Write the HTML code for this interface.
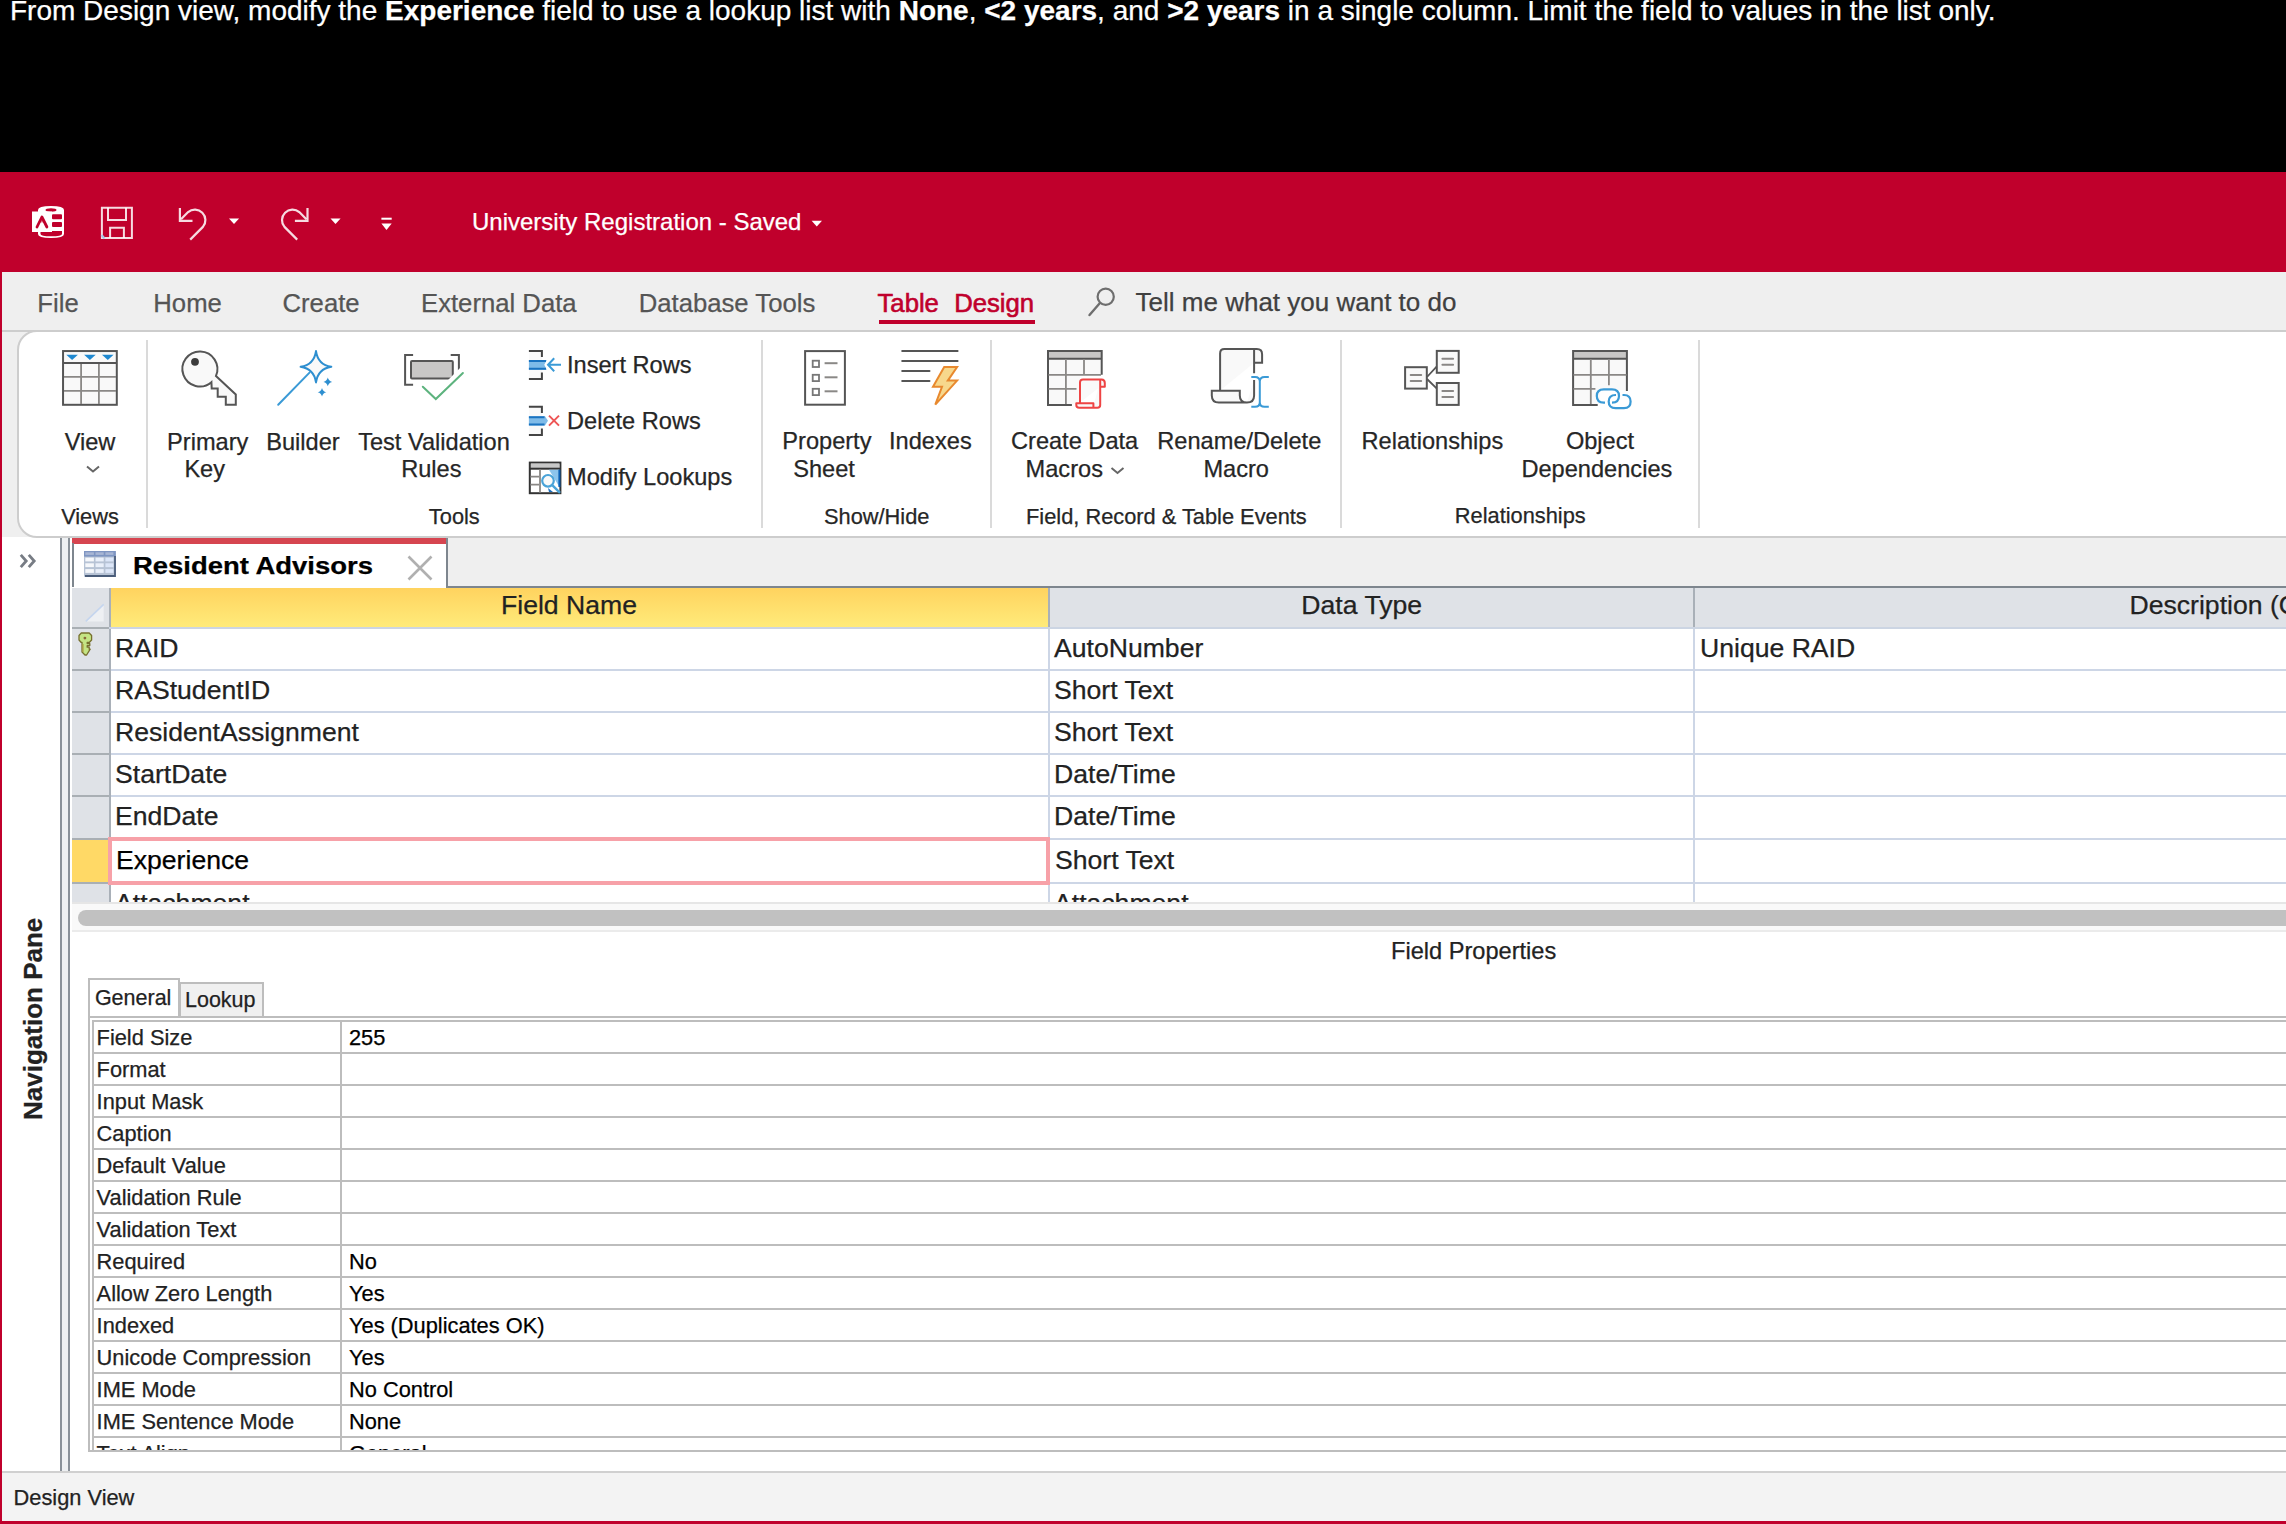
<!DOCTYPE html>
<html><head><meta charset="utf-8"><style>
html,body{margin:0;padding:0;width:2286px;height:1524px;overflow:hidden;background:#fff;font-family:"Liberation Sans", sans-serif;}
div{-webkit-text-stroke:0.25px currentColor;}
</style></head><body>
<div style="position:absolute;left:0px;top:0px;width:2286px;height:172px;background:#000"></div>
<div style="position:absolute;left:10.00px;top:-2.70px;font-size:28px;line-height:28px;color:#fff;font-weight:normal;white-space:nowrap;">From Design view, modify the <b>Experience</b> field to use a lookup list with <b>None</b>, <b>&lt;2 years</b>, and <b>&gt;2 years</b> in a single column. Limit the field to values in the list only.</div>
<div style="position:absolute;left:0px;top:172px;width:2286px;height:100px;background:#C0002C"></div>
<div style="position:absolute;left:472.00px;top:210.38px;font-size:24px;line-height:24px;color:#fff;font-weight:normal;white-space:nowrap;">University Registration - Saved</div>
<div style="position:absolute;left:0px;top:272px;width:2286px;height:265px;background:#EFEFEF"></div>
<div style="position:absolute;left:37.30px;top:290.54px;font-size:25.7px;line-height:25.7px;color:#555555;font-weight:normal;white-space:nowrap;">File</div>
<div style="position:absolute;left:153.30px;top:290.54px;font-size:25.7px;line-height:25.7px;color:#555555;font-weight:normal;white-space:nowrap;">Home</div>
<div style="position:absolute;left:282.50px;top:290.54px;font-size:25.7px;line-height:25.7px;color:#555555;font-weight:normal;white-space:nowrap;">Create</div>
<div style="position:absolute;left:421.00px;top:290.54px;font-size:25.7px;line-height:25.7px;color:#555555;font-weight:normal;white-space:nowrap;">External Data</div>
<div style="position:absolute;left:638.70px;top:290.54px;font-size:25.7px;line-height:25.7px;color:#555555;font-weight:normal;white-space:nowrap;">Database Tools</div>
<div style="position:absolute;left:877.50px;top:290.54px;font-size:25.7px;line-height:25.7px;color:#C0002C;font-weight:normal;white-space:nowrap;-webkit-text-stroke:0.6px currentColor">Table</div>
<div style="position:absolute;left:954.20px;top:290.54px;font-size:25.7px;line-height:25.7px;color:#C0002C;font-weight:normal;white-space:nowrap;-webkit-text-stroke:0.6px currentColor">Design</div>
<div style="position:absolute;left:878.5px;top:320px;width:156px;height:4px;background:#C0002C"></div>
<div style="position:absolute;left:1135.60px;top:289.19px;font-size:26px;line-height:26px;color:#404040;font-weight:normal;white-space:nowrap;">Tell me what you want to do</div>
<div style="position:absolute;left:0px;top:330px;width:2286px;height:2px;background:#CDCDCD"></div>
<div style="position:absolute;left:17px;top:330px;width:2400px;height:208px;box-sizing:border-box;border:2px solid #CDCDCD;border-radius:20px;background:#fff"></div>
<div style="position:absolute;left:-410.00px;width:1000px;text-align:center;top:430.52px;font-size:23.6px;line-height:23.6px;color:#262626;font-weight:normal;white-space:nowrap;">View</div>
<div style="position:absolute;left:-410.00px;width:1000px;text-align:center;top:506.05px;font-size:21.8px;line-height:21.8px;color:#262626;font-weight:normal;white-space:nowrap;">Views</div>
<div style="position:absolute;left:-292.30px;width:1000px;text-align:center;top:430.72px;font-size:23.6px;line-height:23.6px;color:#262626;font-weight:normal;white-space:nowrap;">Primary</div>
<div style="position:absolute;left:-295.30px;width:1000px;text-align:center;top:458.32px;font-size:23.6px;line-height:23.6px;color:#262626;font-weight:normal;white-space:nowrap;">Key</div>
<div style="position:absolute;left:-197.00px;width:1000px;text-align:center;top:430.72px;font-size:23.6px;line-height:23.6px;color:#262626;font-weight:normal;white-space:nowrap;">Builder</div>
<div style="position:absolute;left:-66.00px;width:1000px;text-align:center;top:430.72px;font-size:23.6px;line-height:23.6px;color:#262626;font-weight:normal;white-space:nowrap;">Test Validation</div>
<div style="position:absolute;left:-68.70px;width:1000px;text-align:center;top:458.32px;font-size:23.6px;line-height:23.6px;color:#262626;font-weight:normal;white-space:nowrap;">Rules</div>
<div style="position:absolute;left:567.00px;top:354.22px;font-size:23.6px;line-height:23.6px;color:#262626;font-weight:normal;white-space:nowrap;">Insert Rows</div>
<div style="position:absolute;left:567.00px;top:410.32px;font-size:23.6px;line-height:23.6px;color:#262626;font-weight:normal;white-space:nowrap;">Delete Rows</div>
<div style="position:absolute;left:567.00px;top:466.12px;font-size:23.6px;line-height:23.6px;color:#262626;font-weight:normal;white-space:nowrap;">Modify Lookups</div>
<div style="position:absolute;left:-45.70px;width:1000px;text-align:center;top:505.55px;font-size:21.8px;line-height:21.8px;color:#262626;font-weight:normal;white-space:nowrap;">Tools</div>
<div style="position:absolute;left:326.90px;width:1000px;text-align:center;top:430.32px;font-size:23.6px;line-height:23.6px;color:#262626;font-weight:normal;white-space:nowrap;">Property</div>
<div style="position:absolute;left:324.00px;width:1000px;text-align:center;top:457.92px;font-size:23.6px;line-height:23.6px;color:#262626;font-weight:normal;white-space:nowrap;">Sheet</div>
<div style="position:absolute;left:430.40px;width:1000px;text-align:center;top:430.32px;font-size:23.6px;line-height:23.6px;color:#262626;font-weight:normal;white-space:nowrap;">Indexes</div>
<div style="position:absolute;left:376.70px;width:1000px;text-align:center;top:505.55px;font-size:21.8px;line-height:21.8px;color:#262626;font-weight:normal;white-space:nowrap;">Show/Hide</div>
<div style="position:absolute;left:574.60px;width:1000px;text-align:center;top:430.22px;font-size:23.6px;line-height:23.6px;color:#262626;font-weight:normal;white-space:nowrap;">Create Data</div>
<div style="position:absolute;left:1025.60px;top:458.42px;font-size:23.6px;line-height:23.6px;color:#262626;font-weight:normal;white-space:nowrap;">Macros</div>
<div style="position:absolute;left:739.30px;width:1000px;text-align:center;top:430.22px;font-size:23.6px;line-height:23.6px;color:#262626;font-weight:normal;white-space:nowrap;">Rename/Delete</div>
<div style="position:absolute;left:736.20px;width:1000px;text-align:center;top:457.92px;font-size:23.6px;line-height:23.6px;color:#262626;font-weight:normal;white-space:nowrap;">Macro</div>
<div style="position:absolute;left:666.40px;width:1000px;text-align:center;top:505.65px;font-size:21.8px;line-height:21.8px;color:#262626;font-weight:normal;white-space:nowrap;">Field, Record &amp; Table Events</div>
<div style="position:absolute;left:932.40px;width:1000px;text-align:center;top:430.12px;font-size:23.6px;line-height:23.6px;color:#262626;font-weight:normal;white-space:nowrap;">Relationships</div>
<div style="position:absolute;left:1100.00px;width:1000px;text-align:center;top:430.12px;font-size:23.6px;line-height:23.6px;color:#262626;font-weight:normal;white-space:nowrap;">Object</div>
<div style="position:absolute;left:1096.90px;width:1000px;text-align:center;top:457.62px;font-size:23.6px;line-height:23.6px;color:#262626;font-weight:normal;white-space:nowrap;">Dependencies</div>
<div style="position:absolute;left:1020.30px;width:1000px;text-align:center;top:505.45px;font-size:21.8px;line-height:21.8px;color:#262626;font-weight:normal;white-space:nowrap;">Relationships</div>
<div style="position:absolute;left:146px;top:340px;width:2px;height:188px;background:#DADADA"></div>
<div style="position:absolute;left:761px;top:340px;width:2px;height:188px;background:#DADADA"></div>
<div style="position:absolute;left:990px;top:340px;width:2px;height:188px;background:#DADADA"></div>
<div style="position:absolute;left:1340px;top:340px;width:2px;height:188px;background:#DADADA"></div>
<div style="position:absolute;left:1698px;top:340px;width:2px;height:188px;background:#DADADA"></div>
<div style="position:absolute;left:0px;top:538px;width:2286px;height:934px;background:#fff"></div>
<div style="position:absolute;left:72px;top:538px;width:2214px;height:49px;background:#EFEFEF"></div>
<div style="position:absolute;left:60px;top:538px;width:2px;height:934px;background:#8A9199"></div>
<div style="position:absolute;left:62px;top:538px;width:6px;height:934px;background:#EEF0F2"></div>
<div style="position:absolute;left:68px;top:538px;width:2px;height:934px;background:#8A9199"></div>
<div style="position:absolute;left:41.7px;top:1119.7px;transform-origin:0 0;transform:rotate(-90deg);"><div style="position:absolute;left:0;top:-22.01px;font-size:26px;line-height:26px;font-weight:bold;color:#222;white-space:nowrap">Navigation Pane</div></div>
<div style="position:absolute;left:72px;top:538px;width:376px;height:49px;background:#fff"></div>
<div style="position:absolute;left:72px;top:538px;width:376px;height:6px;background:#D64550"></div>
<div style="position:absolute;left:72px;top:543px;width:2px;height:44px;background:#7E868E"></div>
<div style="position:absolute;left:446px;top:538px;width:2px;height:49px;background:#7E868E"></div>
<div style="position:absolute;left:132.50px;top:554.16px;font-size:24.5px;line-height:24.5px;color:#000;font-weight:bold;white-space:nowrap;transform:scaleX(1.12);transform-origin:0 0">Resident Advisors</div>
<div style="position:absolute;left:446px;top:586px;width:1840px;height:2px;background:#7E868E"></div>
<div style="position:absolute;left:72px;top:588px;width:37px;height:39px;background:#DFE2E7"></div>
<div style="position:absolute;left:109px;top:588px;width:2px;height:39px;background:#A9B0B8"></div>
<div style="position:absolute;left:111px;top:588px;width:937px;height:39px;background:linear-gradient(#FFD35F,#FFEB7A)"></div>
<div style="position:absolute;left:1048px;top:588px;width:2px;height:39px;background:#A9B0B8"></div>
<div style="position:absolute;left:1050px;top:588px;width:643px;height:39px;background:#DFE2E7"></div>
<div style="position:absolute;left:1693px;top:588px;width:2px;height:39px;background:#A9B0B8"></div>
<div style="position:absolute;left:1695px;top:588px;width:600px;height:39px;background:#DFE2E7"></div>
<div style="position:absolute;left:72px;top:627px;width:2214px;height:2px;background:#CCD5E3"></div>
<div style="position:absolute;left:72px;top:627px;width:37px;height:2px;background:#A9AFB4"></div>
<div style="position:absolute;left:501.00px;top:592.38px;font-size:26.6px;line-height:26.6px;color:#222;font-weight:normal;white-space:nowrap;">Field Name</div>
<div style="position:absolute;left:1301.30px;top:592.38px;font-size:26.6px;line-height:26.6px;color:#222;font-weight:normal;white-space:nowrap;">Data Type</div>
<div style="position:absolute;left:2129.50px;top:592.38px;font-size:26.6px;line-height:26.6px;color:#222;font-weight:normal;white-space:nowrap;">Description (Optional)</div>
<div style="position:absolute;left:72px;top:629px;width:2214px;height:273px;background:#fff"></div>
<div style="position:absolute;left:72px;top:629px;width:37px;height:273px;background:#DFE2E7"></div>
<div style="position:absolute;left:109px;top:629px;width:2px;height:273px;background:#A9B0B8"></div>
<div style="position:absolute;left:1048px;top:629px;width:2px;height:273px;background:#CDD6E6"></div>
<div style="position:absolute;left:1693px;top:629px;width:2px;height:273px;background:#CDD6E6"></div>
<div style="position:absolute;left:72px;top:669px;width:37px;height:2px;background:#A9AFB4"></div>
<div style="position:absolute;left:111px;top:669px;width:2175px;height:2px;background:#CDD6E6"></div>
<div style="position:absolute;left:115.00px;top:635.48px;font-size:26.6px;line-height:26.6px;color:#222;font-weight:normal;white-space:nowrap;">RAID</div>
<div style="position:absolute;left:1054.00px;top:635.48px;font-size:26.6px;line-height:26.6px;color:#222;font-weight:normal;white-space:nowrap;">AutoNumber</div>
<div style="position:absolute;left:1700.00px;top:635.48px;font-size:26.6px;line-height:26.6px;color:#222;font-weight:normal;white-space:nowrap;">Unique RAID</div>
<div style="position:absolute;left:72px;top:711px;width:37px;height:2px;background:#A9AFB4"></div>
<div style="position:absolute;left:111px;top:711px;width:2175px;height:2px;background:#CDD6E6"></div>
<div style="position:absolute;left:115.00px;top:677.48px;font-size:26.6px;line-height:26.6px;color:#222;font-weight:normal;white-space:nowrap;">RAStudentID</div>
<div style="position:absolute;left:1054.00px;top:677.48px;font-size:26.6px;line-height:26.6px;color:#222;font-weight:normal;white-space:nowrap;">Short Text</div>
<div style="position:absolute;left:72px;top:753px;width:37px;height:2px;background:#A9AFB4"></div>
<div style="position:absolute;left:111px;top:753px;width:2175px;height:2px;background:#CDD6E6"></div>
<div style="position:absolute;left:115.00px;top:719.48px;font-size:26.6px;line-height:26.6px;color:#222;font-weight:normal;white-space:nowrap;">ResidentAssignment</div>
<div style="position:absolute;left:1054.00px;top:719.48px;font-size:26.6px;line-height:26.6px;color:#222;font-weight:normal;white-space:nowrap;">Short Text</div>
<div style="position:absolute;left:72px;top:795px;width:37px;height:2px;background:#A9AFB4"></div>
<div style="position:absolute;left:111px;top:795px;width:2175px;height:2px;background:#CDD6E6"></div>
<div style="position:absolute;left:115.00px;top:761.48px;font-size:26.6px;line-height:26.6px;color:#222;font-weight:normal;white-space:nowrap;">StartDate</div>
<div style="position:absolute;left:1054.00px;top:761.48px;font-size:26.6px;line-height:26.6px;color:#222;font-weight:normal;white-space:nowrap;">Date/Time</div>
<div style="position:absolute;left:72px;top:837.5px;width:37px;height:2px;background:#A9AFB4"></div>
<div style="position:absolute;left:111px;top:837.5px;width:2175px;height:2px;background:#CDD6E6"></div>
<div style="position:absolute;left:115.00px;top:803.48px;font-size:26.6px;line-height:26.6px;color:#222;font-weight:normal;white-space:nowrap;">EndDate</div>
<div style="position:absolute;left:1054.00px;top:803.48px;font-size:26.6px;line-height:26.6px;color:#222;font-weight:normal;white-space:nowrap;">Date/Time</div>
<div style="position:absolute;left:72px;top:881.5px;width:37px;height:2px;background:#A9AFB4"></div>
<div style="position:absolute;left:111px;top:881.5px;width:2175px;height:2px;background:#CDD6E6"></div>
<div style="position:absolute;left:116.00px;top:846.98px;font-size:26.6px;line-height:26.6px;color:#000;font-weight:normal;white-space:nowrap;">Experience</div>
<div style="position:absolute;left:1055.00px;top:846.98px;font-size:26.6px;line-height:26.6px;color:#222;font-weight:normal;white-space:nowrap;">Short Text</div>
<div style="position:absolute;left:115.00px;top:889.98px;font-size:26.6px;line-height:26.6px;color:#222;font-weight:normal;white-space:nowrap;">Attachment</div>
<div style="position:absolute;left:1054.00px;top:889.98px;font-size:26.6px;line-height:26.6px;color:#222;font-weight:normal;white-space:nowrap;">Attachment</div>
<div style="position:absolute;left:72px;top:840px;width:37px;height:42px;background:#FFD966"></div>
<div style="position:absolute;left:108px;top:837px;width:942px;height:48px;box-sizing:border-box;border:4px solid #F7A1A8;"></div>
<div style="position:absolute;left:72px;top:902px;width:2214px;height:2px;background:#E6E6E6"></div>
<div style="position:absolute;left:72px;top:904px;width:2214px;height:26px;background:#F9F9F9"></div>
<div style="position:absolute;left:78px;top:910px;width:2400px;height:16px;border-radius:8px;background:#C1C1C1"></div>
<div style="position:absolute;left:72px;top:930px;width:2214px;height:2px;background:#EBEBEB"></div>
<div style="position:absolute;left:1391.00px;top:940.32px;font-size:23.6px;line-height:23.6px;color:#222;font-weight:normal;white-space:nowrap;">Field Properties</div>
<div style="position:absolute;left:88px;top:978px;width:92px;height:40px;box-sizing:border-box;border:2px solid #BDBDBD;border-bottom:none;background:#fff"></div>
<div style="position:absolute;left:179px;top:982px;width:85px;height:36px;box-sizing:border-box;border:2px solid #BDBDBD;border-bottom:none;background:#F0F0F0"></div>
<div style="position:absolute;left:94.90px;top:987.60px;font-size:21.5px;line-height:21.5px;color:#222;font-weight:normal;white-space:nowrap;">General</div>
<div style="position:absolute;left:185.00px;top:989.80px;font-size:21.5px;line-height:21.5px;color:#222;font-weight:normal;white-space:nowrap;">Lookup</div>
<div style="position:absolute;left:88px;top:1016px;width:2198px;height:2px;background:#BDBDBD"></div>
<div style="position:absolute;left:88px;top:1016px;width:2px;height:436px;background:#BDBDBD"></div>
<div style="position:absolute;left:88px;top:1450px;width:2198px;height:2px;background:#BDBDBD"></div>
<div style="position:absolute;left:92px;top:1020px;width:2194px;height:2px;background:#BDBDBD"></div>
<div style="position:absolute;left:92px;top:1020px;width:2px;height:430px;background:#BDBDBD"></div>
<div style="position:absolute;left:340px;top:1020px;width:2px;height:430px;background:#BDBDBD"></div>
<div style="position:absolute;left:92px;top:1052px;width:2194px;height:2px;background:#BDBDBD"></div>
<div style="position:absolute;left:96.60px;top:1026.95px;font-size:21.8px;line-height:21.8px;color:#222;font-weight:normal;white-space:nowrap;">Field Size</div>
<div style="position:absolute;left:349.00px;top:1026.95px;font-size:21.8px;line-height:21.8px;color:#000;font-weight:normal;white-space:nowrap;">255</div>
<div style="position:absolute;left:92px;top:1084px;width:2194px;height:2px;background:#BDBDBD"></div>
<div style="position:absolute;left:96.60px;top:1058.95px;font-size:21.8px;line-height:21.8px;color:#222;font-weight:normal;white-space:nowrap;">Format</div>
<div style="position:absolute;left:92px;top:1116px;width:2194px;height:2px;background:#BDBDBD"></div>
<div style="position:absolute;left:96.60px;top:1090.95px;font-size:21.8px;line-height:21.8px;color:#222;font-weight:normal;white-space:nowrap;">Input Mask</div>
<div style="position:absolute;left:92px;top:1148px;width:2194px;height:2px;background:#BDBDBD"></div>
<div style="position:absolute;left:96.60px;top:1122.95px;font-size:21.8px;line-height:21.8px;color:#222;font-weight:normal;white-space:nowrap;">Caption</div>
<div style="position:absolute;left:92px;top:1180px;width:2194px;height:2px;background:#BDBDBD"></div>
<div style="position:absolute;left:96.60px;top:1154.95px;font-size:21.8px;line-height:21.8px;color:#222;font-weight:normal;white-space:nowrap;">Default Value</div>
<div style="position:absolute;left:92px;top:1212px;width:2194px;height:2px;background:#BDBDBD"></div>
<div style="position:absolute;left:96.60px;top:1186.95px;font-size:21.8px;line-height:21.8px;color:#222;font-weight:normal;white-space:nowrap;">Validation Rule</div>
<div style="position:absolute;left:92px;top:1244px;width:2194px;height:2px;background:#BDBDBD"></div>
<div style="position:absolute;left:96.60px;top:1218.95px;font-size:21.8px;line-height:21.8px;color:#222;font-weight:normal;white-space:nowrap;">Validation Text</div>
<div style="position:absolute;left:92px;top:1276px;width:2194px;height:2px;background:#BDBDBD"></div>
<div style="position:absolute;left:96.60px;top:1250.95px;font-size:21.8px;line-height:21.8px;color:#222;font-weight:normal;white-space:nowrap;">Required</div>
<div style="position:absolute;left:349.00px;top:1250.95px;font-size:21.8px;line-height:21.8px;color:#000;font-weight:normal;white-space:nowrap;">No</div>
<div style="position:absolute;left:92px;top:1308px;width:2194px;height:2px;background:#BDBDBD"></div>
<div style="position:absolute;left:96.60px;top:1282.95px;font-size:21.8px;line-height:21.8px;color:#222;font-weight:normal;white-space:nowrap;">Allow Zero Length</div>
<div style="position:absolute;left:349.00px;top:1282.95px;font-size:21.8px;line-height:21.8px;color:#000;font-weight:normal;white-space:nowrap;">Yes</div>
<div style="position:absolute;left:92px;top:1340px;width:2194px;height:2px;background:#BDBDBD"></div>
<div style="position:absolute;left:96.60px;top:1314.95px;font-size:21.8px;line-height:21.8px;color:#222;font-weight:normal;white-space:nowrap;">Indexed</div>
<div style="position:absolute;left:349.00px;top:1314.95px;font-size:21.8px;line-height:21.8px;color:#000;font-weight:normal;white-space:nowrap;">Yes (Duplicates OK)</div>
<div style="position:absolute;left:92px;top:1372px;width:2194px;height:2px;background:#BDBDBD"></div>
<div style="position:absolute;left:96.60px;top:1346.95px;font-size:21.8px;line-height:21.8px;color:#222;font-weight:normal;white-space:nowrap;">Unicode Compression</div>
<div style="position:absolute;left:349.00px;top:1346.95px;font-size:21.8px;line-height:21.8px;color:#000;font-weight:normal;white-space:nowrap;">Yes</div>
<div style="position:absolute;left:92px;top:1404px;width:2194px;height:2px;background:#BDBDBD"></div>
<div style="position:absolute;left:96.60px;top:1378.95px;font-size:21.8px;line-height:21.8px;color:#222;font-weight:normal;white-space:nowrap;">IME Mode</div>
<div style="position:absolute;left:349.00px;top:1378.95px;font-size:21.8px;line-height:21.8px;color:#000;font-weight:normal;white-space:nowrap;">No Control</div>
<div style="position:absolute;left:92px;top:1436px;width:2194px;height:2px;background:#BDBDBD"></div>
<div style="position:absolute;left:96.60px;top:1410.95px;font-size:21.8px;line-height:21.8px;color:#222;font-weight:normal;white-space:nowrap;">IME Sentence Mode</div>
<div style="position:absolute;left:349.00px;top:1410.95px;font-size:21.8px;line-height:21.8px;color:#000;font-weight:normal;white-space:nowrap;">None</div>
<div style="position:absolute;left:96.60px;top:1442.95px;font-size:21.8px;line-height:21.8px;color:#222;font-weight:normal;white-space:nowrap;">Text Align</div>
<div style="position:absolute;left:349.00px;top:1442.95px;font-size:21.8px;line-height:21.8px;color:#000;font-weight:normal;white-space:nowrap;">General</div>
<div style="position:absolute;left:90px;top:1450px;width:2196px;height:21px;background:#fff"></div>
<div style="position:absolute;left:88px;top:1450px;width:2198px;height:2px;background:#BDBDBD"></div>
<div style="position:absolute;left:0px;top:1471px;width:2286px;height:2px;background:#D0D0D0"></div>
<div style="position:absolute;left:0px;top:1473px;width:2286px;height:48px;background:#F3F3F3"></div>
<div style="position:absolute;left:13.60px;top:1486.55px;font-size:21.8px;line-height:21.8px;color:#222;font-weight:normal;white-space:nowrap;">Design View</div>
<div style="position:absolute;left:0px;top:1521px;width:2286px;height:3px;background:#C0002C"></div>
<div style="position:absolute;left:0px;top:172px;width:2px;height:1352px;background:#C0002C"></div>
<svg style="position:absolute;left:0;top:0" width="2286" height="1524" viewBox="0 0 2286 1524"><path d="M38,210 Q38,206 51,206 Q64,206 64,210 L64,234 Q64,238 51,238 Q38,238 38,234 Z" fill="#fff"/>
<ellipse cx="51" cy="210" rx="5.5" ry="1.7" fill="#C0002C"/>
<rect x="52" y="214.2" width="10" height="5" rx="1" fill="#C0002C"/>
<rect x="52" y="222" width="10" height="5" rx="1" fill="#C0002C"/>
<path d="M40.5,231 H62 V234 Q62,236.3 51,236.3 Q40.5,236.3 40.5,234 Z" fill="#C0002C"/>
<rect x="32" y="211.5" width="20" height="20.5" fill="#fff"/>
<path d="M39.5,222.5 L41.9,217.5 L44.5,222.5 Z" fill="#E58A9A"/>
<path d="M37,227 L41.9,217 L46.9,227" stroke="#C0002C" stroke-width="2.8" fill="none" stroke-linejoin="round" stroke-linecap="round"/>
<path d="M101.9,207.8 H131.9 V238.1 H101.9 Z" stroke="rgba(255,255,255,0.86)" stroke-width="2" fill="none"/>
<path d="M101.5,235 L104.5,238.5" stroke="#A8C8E8" stroke-width="2.2"/>
<path d="M108,207.8 V219.9 H126 V207.8" stroke="rgba(255,255,255,0.86)" stroke-width="2" fill="none"/>
<path d="M110.1,238.1 V227.7 H123.9 V238.1" stroke="rgba(255,255,255,0.86)" stroke-width="2" fill="none"/>
<path d="M179.9,207.9 V220.8 H192.5" stroke="rgba(255,255,255,0.86)" stroke-width="2.2" fill="none"/><path d="M181,219.3 L188.1,212.1 A10.5,10.5 0 0 1 202.9,226.9 L190.2,239.6" stroke="rgba(255,255,255,0.86)" stroke-width="2.2" fill="none"/>
<g transform="translate(487.4,0) scale(-1,1)"><path d="M179.9,207.9 V220.8 H192.5" stroke="rgba(255,255,255,0.86)" stroke-width="2.2" fill="none"/><path d="M181,219.3 L188.1,212.1 A10.5,10.5 0 0 1 202.9,226.9 L190.2,239.6" stroke="rgba(255,255,255,0.86)" stroke-width="2.2" fill="none"/></g>
<path d="M229,218.6 H239.1 L234,224 Z" fill="#fff"/>
<path d="M330.5,218.6 H340.6 L335.5,224 Z" fill="#fff"/>
<rect x="381.4" y="217.7" width="10.3" height="2" fill="#fff"/>
<path d="M381.4,223.5 H391.7 L386.5,230 Z" fill="#fff"/>
<path d="M811.6,220.8 H822 L816.8,226.6 Z" fill="#fff"/>
<circle cx="1105.7" cy="296.7" r="8.1" stroke="#6E6E6E" stroke-width="2.2" fill="none"/>
<path d="M1099.5,303.5 L1089.5,315" stroke="#6E6E6E" stroke-width="2.4" stroke-linecap="round"/>
<rect x="63.05" y="351.05" width="53.75" height="53.75" fill="#F9F9F9" stroke="#555555" stroke-width="2"/>
<path d="M63,363 H117" stroke="#555555" stroke-width="2"/>
<path d="M64,376.9 H116 M64,390.9 H116 M81.1,364 V404 M98.9,364 V404" stroke="#8A8886" stroke-width="1.8"/>
<path d="M66.3,354.7 H77.89999999999999 L72.1,360 Z" fill="#1E88D0"/>
<path d="M84.1,354.7 H95.69999999999999 L89.89999999999999,360 Z" fill="#1E88D0"/>
<path d="M102,354.7 H113.6 L107.8,360 Z" fill="#1E88D0"/>
<path d="M87,466.5 L93,471.5 L99,466.5" stroke="#666" stroke-width="2" fill="none"/>
<path d="M215.97,375.92 L235.8,394.4 V404.7 H225.8 V396.7 H217.7 V388.6 H211.7 L211.42,382.17 A17.5,17.5 0 1 1 215.97,375.92 Z" fill="#F9F9F9" stroke="#555555" stroke-width="2" stroke-linejoin="miter"/>
<circle cx="195" cy="361.8" r="3.9" fill="#3C3C3C"/>
<path d="M278.2,404.7 L309.5,372.6" stroke="#3A9AD6" stroke-width="2" stroke-linecap="round"/>
<path d="M316,351.1 Q318,364.8 331.3,366.8 Q318,368.8 316,382.4 Q314,368.8 300.6,366.8 Q314,364.8 316,351.1 Z" fill="#F9F9F9" stroke="#2E8FD0" stroke-width="2" stroke-linejoin="round"/>
<path d="M327.8,377.59999999999997 Q328.6,381.09999999999997 332.1,381.9 Q328.6,382.7 327.8,386.2 Q327.0,382.7 323.5,381.9 Q327.0,381.09999999999997 327.8,377.59999999999997 Z" fill="#2E8FD0"/>
<path d="M322,387.9 Q322.8,391.4 326.3,392.2 Q322.8,393.0 322,396.5 Q321.2,393.0 317.7,392.2 Q321.2,391.4 322,387.9 Z" fill="#2E8FD0"/>
<path d="M413.1,355.1 H405.1 V384.7 H413.1" stroke="#555555" stroke-width="2" fill="none"/>
<path d="M450.7,355.1 H458.9 V370.5" stroke="#555555" stroke-width="2" fill="none"/>
<rect x="411" y="361" width="41.8" height="17.6" rx="1" fill="#C8C7C6" stroke="#555555" stroke-width="2"/>
<path d="M446,385 L465,366" stroke="#fff" stroke-width="4"/>
<path d="M422.8,386.8 L435.8,399 L462.9,373" stroke="#5DB37E" stroke-width="2" fill="none" stroke-linecap="round"/>
<rect x="528.9" y="350.9" width="13" height="28" fill="#F9F9F9"/><path d="M528.9,350.9 H541.9 V357.09999999999997 M541.9,372.5 V379.0 H528.9" stroke="#444" stroke-width="2" fill="none"/><path d="M528.9,359.9 H546.8 L544.3,364.79999999999995 L546.8,369.79999999999995 H528.9 Z" fill="#7FBBE8"/><path d="M528.9,360.9 H546 M528.9,368.79999999999995 H546" stroke="#1A73C0" stroke-width="2"/><path d="M548.5,364.79999999999995 H561 M554.2,358.29999999999995 L548,364.79999999999995 L554.2,371.29999999999995" stroke="#3A9AD6" stroke-width="2" fill="none"/>
<rect x="528.9" y="406.8" width="13" height="28" fill="#F9F9F9"/><path d="M528.9,406.8 H541.9 V413.0 M541.9,428.40000000000003 V434.90000000000003 H528.9" stroke="#444" stroke-width="2" fill="none"/><path d="M528.9,416.3 H545 L548,420.8 L545,425.6 H528.9 Z" fill="#7FBBE8"/><path d="M528.9,417.3 H544.5 M528.9,424.6 H544.5" stroke="#1A73C0" stroke-width="2"/><path d="M549,415.6 L559,425.6 M559,415.6 L549,425.6" stroke="#EE5555" stroke-width="2"/>
<rect x="529.8" y="462.6" width="30.6" height="30.6" fill="#fff" stroke="#333" stroke-width="2"/>
<rect x="531" y="463.6" width="28.4" height="5" fill="#C8C8C8"/>
<path d="M529.8,468.7 H560.4" stroke="#333" stroke-width="2"/>
<path d="M540,469.5 V492.5 M530.5,476.7 H539 M530.5,484.7 H539" stroke="#8A8886" stroke-width="1.8"/>
<path d="M549,469.7 H559.4 V487 Z" fill="#8CC4EC"/>
<path d="M559.4,469.7 V487" stroke="#0A5FB4" stroke-width="2"/>
<path d="M549,492 H553 L548,488 Z" fill="#1A6FC0"/>
<circle cx="548" cy="480.8" r="5.8" fill="#F9F9F9" stroke="#4AA3D8" stroke-width="2.2"/>
<path d="M552.5,485.3 L560,492.8" stroke="#4AA3D8" stroke-width="2.4"/>
<rect x="805.1" y="351.1" width="39.8" height="53.6" fill="#fff" stroke="#555555" stroke-width="2"/>
<rect x="812.7" y="360.7" width="6.3" height="6.3" fill="none" stroke="#777" stroke-width="1.8"/>
<path d="M824.6,363.2 H837.5" stroke="#8A8886" stroke-width="2"/>
<rect x="812.7" y="374.8" width="6.3" height="6.3" fill="none" stroke="#777" stroke-width="1.8"/>
<path d="M824.6,377.3 H837.5" stroke="#8A8886" stroke-width="2"/>
<rect x="812.7" y="388.8" width="6.3" height="6.3" fill="none" stroke="#777" stroke-width="1.8"/>
<path d="M824.6,391.3 H837.5" stroke="#8A8886" stroke-width="2"/>
<path d="M902.2,350.9 H957.6 M902.2,361 H957.6 M902.2,371 H929.5 M902.2,381 H929.5" stroke="#555555" stroke-width="2" stroke-linecap="round"/>
<path d="M944.2,367 H957.1 L947.8,380.6 H957.1 L935.3,404.7 L942,386.8 H933 Z" fill="#F7D88C" stroke="#E8892E" stroke-width="2" stroke-linejoin="miter"/>
<path d="M1048,351.1 H1101.7 V358.7 H1048 Z" fill="#C8C7C6"/>
<path d="M1049,358.7 H1100.7 V374.8 H1080 V404 H1049 Z" fill="#F9F9F9"/>
<path d="M1071.9,404.9 H1048 V351.1 H1101.7 V374.8 M1048,358.7 H1101.7" stroke="#555555" stroke-width="2" fill="none"/>
<path d="M1065.9,359 V404 M1084,359 V374.8 M1048.5,374.8 H1101 M1048.5,388.8 H1076.5" stroke="#8A8886" stroke-width="1.8" fill="none"/>
<path d="M1080,402.5 V382.5 Q1080,379.5 1083,379.5 H1101.5 Q1104.8,379.5 1104.8,383 V386.7 H1100.2 M1100.2,380 V405 Q1100.2,407.8 1097.4,407.8 H1079.2 Q1076.3,407.8 1076.3,405 V403.2 H1093.4 V407" stroke="#EE4444" stroke-width="2" fill="#F9F9F9" stroke-linejoin="round"/>
<path d="M1220.1,390.5 V353.5 Q1220.1,349.1 1224.5,349.1 H1256.8 Q1262.1,349.1 1262.1,354.4 V362.7 H1254.1" stroke="#555555" stroke-width="2" fill="#F9F9F9"/>
<path d="M1254.1,349.5 V373.2 M1254.1,380.1 V395.5 Q1254.1,402.6 1247,402.6 H1218.8 Q1211.8,402.6 1211.8,395.6 V390.7 H1239.8 V395.6 Q1239.8,402.6 1247,402.6" stroke="#555555" stroke-width="2" fill="#F9F9F9"/>
<path d="M1251.3,376.9 H1255 Q1259.8,376.9 1259.8,381.5 V402.2 Q1259.8,406.8 1255,406.8 H1251.3 M1268.8,376.9 H1264.6 Q1259.8,376.9 1259.8,381.5 M1259.8,402.2 Q1259.8,406.8 1264.6,406.8 H1268.8" stroke="#3A9AD6" stroke-width="2" fill="none"/>
<rect x="1405.1" y="367.2" width="21.7" height="21.4" fill="#F9F9F9" stroke="#555555" stroke-width="2"/>
<path d="M1410.6999999999998,374.9 H1421.2 M1410.6999999999998,380.9 H1421.2" stroke="#8A8886" stroke-width="2" stroke-linecap="round"/>
<rect x="1436.8" y="350.9" width="21.9" height="21.9" fill="#F9F9F9" stroke="#555555" stroke-width="2"/>
<path d="M1442.3999999999999,358.85 H1453.1000000000001 M1442.3999999999999,364.85 H1453.1000000000001" stroke="#8A8886" stroke-width="2" stroke-linecap="round"/>
<rect x="1436.8" y="383" width="21.9" height="21.9" fill="#F9F9F9" stroke="#555555" stroke-width="2"/>
<path d="M1442.3999999999999,390.95 H1453.1000000000001 M1442.3999999999999,396.95 H1453.1000000000001" stroke="#8A8886" stroke-width="2" stroke-linecap="round"/>
<path d="M1427,377 L1436.6,366.6 M1427,379 L1436.6,388.4" stroke="#555555" stroke-width="1.8"/>
<path d="M1573.1,351.1 H1626.9 V358.7 H1573.1 Z" fill="#C8C7C6"/>
<path d="M1574,358.7 H1626 V390 H1600 V404 H1574 Z" fill="#F9F9F9"/>
<path d="M1597.7,404.9 H1573.1 V351.1 H1626.9 V390.9 M1573.1,358.7 H1626.9" stroke="#555555" stroke-width="2" fill="none"/>
<path d="M1590.8,359 V404 M1608.9,359 V385.3 M1573.5,374.8 H1626.5 M1573.5,388.8 H1595.4" stroke="#8A8886" stroke-width="1.8" fill="none"/>
<path d="M1605,402.6 H1603.8 Q1596.8,402.6 1596.8,396 Q1596.8,389.4 1603.8,389.4 H1612 Q1619,389.4 1619,396 Q1619,402.6 1612,402.6" stroke="#3A9AD6" stroke-width="2.2" fill="none"/>
<path d="M1616,395 H1615.6 Q1608.7,395 1608.7,401.6 Q1608.7,408.2 1615.6,408.2 H1624 Q1630.6,408.2 1630.6,401.6 Q1630.6,395 1624,395 H1622.5" stroke="#3A9AD6" stroke-width="2.2" fill="none"/>
<path d="M1111.5,468 L1117.5,473 L1123.5,468" stroke="#666" stroke-width="2" fill="none"/>
<path d="M20.8,554.8 L26.2,561 L20.8,567.2 M28.8,554.8 L34.2,561 L28.8,567.2" stroke="#777C84" stroke-width="2.8" fill="none" stroke-linejoin="miter"/>
<rect x="84" y="551" width="31.8" height="25.7" fill="#B7C3D5"/>
<rect x="84" y="551" width="31.8" height="5.6" fill="#7E95C2"/>
<rect x="85.3" y="552.3" width="8.6" height="2.6" fill="#A8B6D4"/><rect x="95.5" y="552.3" width="8.2" height="2.6" fill="#A8B6D4"/><rect x="105.4" y="552.3" width="8" height="2.6" fill="#A8B6D4"/>
<rect x="85.3" y="557.6" width="8.6" height="3.8" fill="#F6F8FB"/><rect x="95.5" y="557.6" width="8.2" height="3.8" fill="#EAF0FA"/><rect x="105.4" y="557.6" width="8" height="3.8" fill="#DCE6F8"/>
<rect x="85.3" y="563.3" width="8.6" height="3.8" fill="#F6F8FB"/><rect x="95.5" y="563.3" width="8.2" height="3.8" fill="#EAF0FA"/><rect x="105.4" y="563.3" width="8" height="3.8" fill="#DCE6F8"/>
<rect x="85.3" y="569.1" width="8.6" height="3.8" fill="#F6F8FB"/><rect x="95.5" y="569.1" width="8.2" height="3.8" fill="#EAF0FA"/><rect x="105.4" y="569.1" width="8" height="3.8" fill="#DCE6F8"/>
<path d="M115,556 V576 H85" stroke="#4A5D7A" stroke-width="1.8" fill="none"/>
<path d="M408.5,556.5 L431.5,579.5 M431.5,556.5 L408.5,579.5" stroke="#B0B0B0" stroke-width="2.6"/>
<path d="M85.8,621.4 L103.7,604.4 V621.4 Z" fill="#EEF0F3"/>
<path d="M85.8,621.4 L103.7,604.4" stroke="#C5D5EE" stroke-width="1.6"/>
<path d="M79,635.5 L81.3,633 H89.2 L91.6,635.5 V640 L89.5,642.3 H87.2 V643.6 H89.8 V645.6 H87.2 V647.2 H89.2 V649.2 H90.2 L86.6,655 H85 L82,652 V642.3 H81 L79,640 Z" fill="#C4E484" stroke="#77702E" stroke-width="1.3" stroke-linejoin="round"/>
<path d="M83,644 V652" stroke="#B0A040" stroke-width="1.2"/>
<circle cx="84.9" cy="638.1" r="1.4" fill="#8A6A3A"/></svg>
</body></html>
